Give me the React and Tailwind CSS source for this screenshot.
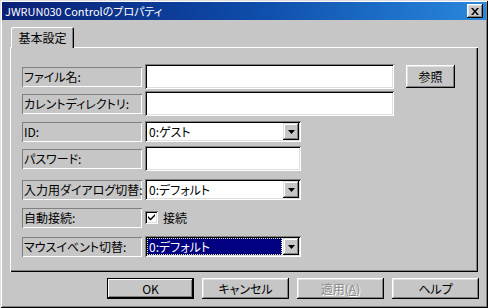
import React from 'react';

const FONT = "font-['Noto_Sans_CJK_JP',sans-serif] [font-feature-settings:'palt']";

function Label({ children }) {
  return (
    <div className="w-[120px] h-[20px] flex items-center pl-[2px] whitespace-nowrap shadow-[inset_1px_1px_#808080,inset_-1px_-1px_#fff]">
      {children}
    </div>
  );
}

function TextBox({ width }) {
  return (
    <div
      className={`${width} h-[25px] bg-white shadow-[inset_1px_1px_#808080,inset_-1px_-1px_#fff,inset_2px_2px_#000,inset_-2px_-2px_#dfdfdf]`}
    />
  );
}

function Arrow() {
  return (
    <div className="w-[16px] h-full flex items-center justify-center bg-[#c6c6c6] shadow-[inset_-1px_-1px_#000,inset_1px_1px_#dfdfdf,inset_-2px_-2px_#808080,inset_2px_2px_#fff]">
      <svg width="7" height="4" viewBox="0 0 7 4">
        <path d="M0 0h7L3.5 4z" fill="#000" />
      </svg>
    </div>
  );
}

function Select({ value, focused }) {
  return (
    <div className="w-[156px] h-[21px] flex p-[2px] bg-white shadow-[inset_1px_1px_#808080,inset_-1px_-1px_#fff,inset_2px_2px_#000,inset_-2px_-2px_#dfdfdf]">
      {focused ? (
        <div className="flex-1 flex items-center pl-[1px] mr-[1px] bg-[#000080] text-white border border-dotted border-[#e8e8a0]">
          {value}
        </div>
      ) : (
        <div className="flex-1 flex items-center pl-[2px]">{value}</div>
      )}
      <Arrow />
    </div>
  );
}

function Button({ children, isDefault, disabled, className = '' }) {
  const frame = isDefault
    ? 'shadow-[inset_0_0_0_1px_#000,inset_-2px_-2px_#000,inset_2px_2px_#fff,inset_-3px_-3px_#808080]'
    : 'shadow-[inset_-1px_-1px_#000,inset_1px_1px_#fff,inset_-2px_-2px_#808080,inset_2px_2px_#dfdfdf]';
  return (
    <div className={`${frame} ${className} flex items-center justify-center bg-[#c6c6c6]`}>
      {disabled ? (
        <span className="text-[#8a8a8a] [text-shadow:1px_1px_#fff]">{children}</span>
      ) : (
        <span>{children}</span>
      )}
    </div>
  );
}

export default function App() {
  return (
    <div className={`w-[488px] h-[308px] bg-[#c6c6c6] p-[2px] flex flex-col text-[12px] leading-none text-black ${FONT} shadow-[inset_1px_1px_#dfdfdf,inset_-1px_-1px_#000,inset_2px_2px_#fff,inset_-2px_-2px_#808080]`}>
      {/* title bar */}
      <div className="h-[18px] flex items-center justify-between pl-[3px] pr-[3px] bg-linear-to-r from-[#0a1f75] via-[#0e4aa8] to-[#2a88dc]">
        <span className="text-white text-[11px]">JWRUN030 Controlのプロパティ</span>
        <div className="w-[16px] h-[14px] flex items-center justify-center bg-[#c6c6c6] shadow-[inset_-1px_-1px_#000,inset_1px_1px_#fff,inset_-2px_-2px_#808080,inset_2px_2px_#dfdfdf]">
          <svg width="8" height="7" viewBox="0 0 8 7">
            <path d="M0 0h2l2 2.5L6 0h2L5 3.5 8 7H6L4 4.5 2 7H0l3-3.5z" fill="#000" />
          </svg>
        </div>
      </div>

      <div className="pl-[8px] flex flex-col">
        {/* tab */}
        <div className="mt-[7px] pl-[1px] flex">
          <div className="relative z-10 -mb-[1px] w-[63px] h-[21px] flex items-center justify-center bg-[#c6c6c6] rounded-tl-[2px] rounded-tr-[2px] shadow-[inset_1px_1px_#fff,inset_-1px_0_#000,inset_-2px_0_#808080]">
            基本設定
          </div>
        </div>

        {/* panel */}
        <div className="w-[468px] h-[225px] pl-[12px] pt-[17px] flex flex-col shadow-[inset_1px_1px_#fff,inset_-1px_-1px_#000,inset_-2px_-2px_#808080]">
          <div className="flex items-center gap-[3px]">
            <Label>ファイル名:</Label>
            <TextBox width="w-[249px]" />
            <Button className="ml-[9px] w-[49px] h-[23px]">参照</Button>
          </div>
          <div className="mt-[2px] flex items-center gap-[3px]">
            <Label>カレントディレクトリ:</Label>
            <TextBox width="w-[249px]" />
          </div>
          <div className="mt-[5px] flex items-center gap-[3px]">
            <Label>ID:</Label>
            <Select value="0:ゲスト" />
          </div>
          <div className="mt-[4px] flex items-center gap-[3px]">
            <Label>パスワード:</Label>
            <TextBox width="w-[156px]" />
          </div>
          <div className="mt-[8px] flex items-center gap-[3px]">
            <Label>入力用ダイアログ切替:</Label>
            <Select value="0:デフォルト" />
          </div>
          <div className="mt-[7px] h-[21px] flex items-center gap-[3px]">
            <Label>自動接続:</Label>
            <div className="w-[13px] h-[13px] bg-white flex items-center justify-center shadow-[inset_1px_1px_#808080,inset_-1px_-1px_#fff,inset_2px_2px_#000,inset_-2px_-2px_#dfdfdf]">
              <svg width="7" height="7" viewBox="0 0 7 7">
                <path d="M0 2l2.5 2.5L7 0v2L2.5 6.5 0 4z" fill="#000" />
              </svg>
            </div>
            <span className="ml-[2px]">接続</span>
          </div>
          <div className="mt-[8px] flex items-center gap-[3px]">
            <Label>マウスイベント切替:</Label>
            <Select value="0:デフォルト" focused />
          </div>
        </div>

        {/* buttons */}
        <div className="mt-[6px] pl-[97px] flex gap-[8px]">
          <Button isDefault className="w-[87px] h-[21px]">OK</Button>
          <Button className="w-[87px] h-[21px]">キャンセル</Button>
          <Button disabled className="w-[87px] h-[21px]">
            適用(<span className="underline">A</span>)
          </Button>
          <Button className="w-[87px] h-[21px]">ヘルプ</Button>
        </div>
      </div>
    </div>
  );
}
